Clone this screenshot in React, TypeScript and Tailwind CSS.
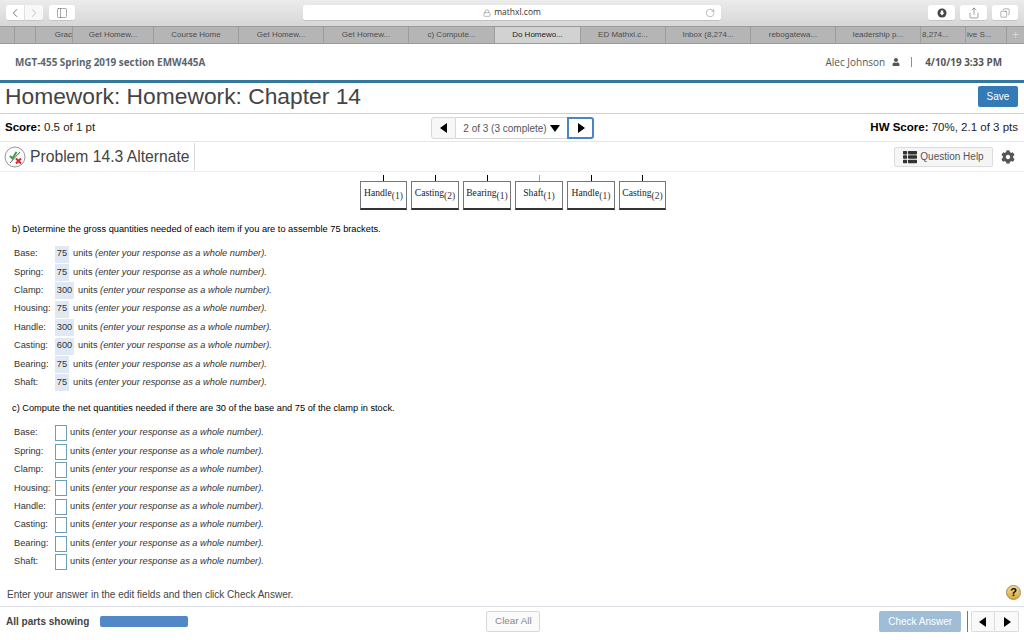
import { ChevronLeft, ChevronRight, PanelLeft, RotateCw, Share, Copy, Lock } from 'lucide-react';
import { FaUser, FaCog, FaThList } from 'react-icons/fa';

const sans = "font-['Liberation_Sans',Arial,sans-serif]";

const tabs = [
  { w: 'w-[15px]', label: '' },
  { w: 'w-[21px]', label: '' },
  { w: 'w-[37px]', label: 'Grac', right: true },
  { w: 'w-[81px]', label: 'Get Homew...' },
  { w: 'w-[85px]', label: 'Course Home' },
  { w: 'w-[85px]', label: 'Get Homew...' },
  { w: 'w-[85px]', label: 'Get Homew...' },
  { w: 'w-[86px]', label: 'c) Compute...' },
  { w: 'w-[86px]', label: 'Do Homewo...', active: true },
  { w: 'w-[85px]', label: 'ED Mathxl.c...' },
  { w: 'w-[85px]', label: 'Inbox (8,274...' },
  { w: 'w-[85px]', label: 'rebogatewa...' },
  { w: 'w-[85px]', label: 'leadership p...' },
  { w: 'w-[45px]', label: '8,274...', left: true },
  { w: 'w-[41px]', label: 'ive S...', left: true },
];

const parts = [
  { name: 'Handle', n: '(1)', w: 'w-[47px]', stem: 'bg-black' },
  { name: 'Casting', n: '(2)', w: 'w-[48px]', stem: 'bg-black' },
  { name: 'Bearing', n: '(1)', w: 'w-[48px]', stem: 'bg-black' },
  { name: 'Shaft', n: '(1)', w: 'w-[48px]', stem: 'bg-gray-400' },
  { name: 'Handle', n: '(1)', w: 'w-[48px]', stem: 'bg-black' },
  { name: 'Casting', n: '(2)', w: 'w-[47px]', stem: 'bg-black' },
];

const gross = [
  { label: 'Base:', value: '75', w: 'w-[14px]' },
  { label: 'Spring:', value: '75', w: 'w-[14px]' },
  { label: 'Clamp:', value: '300', w: 'w-[19px]' },
  { label: 'Housing:', value: '75', w: 'w-[14px]' },
  { label: 'Handle:', value: '300', w: 'w-[19px]' },
  { label: 'Casting:', value: '600', w: 'w-[19px]' },
  { label: 'Bearing:', value: '75', w: 'w-[14px]' },
  { label: 'Shaft:', value: '75', w: 'w-[14px]' },
];

const net = ['Base:', 'Spring:', 'Clamp:', 'Housing:', 'Handle:', 'Casting:', 'Bearing:', 'Shaft:'];

const Hint = () => (
  <span className="text-[#333]">
    units <em>(enter your response as a whole number).</em>
  </span>
);

const Left = ({ size = 10 }: { size?: number }) => (
  <svg width={size} height={size} viewBox="0 0 10 10"><polygon points="8,0 8,10 1,5" fill="#000" /></svg>
);

const Right = ({ size = 10 }: { size?: number }) => (
  <svg width={size} height={size} viewBox="0 0 10 10"><polygon points="2,0 2,10 9,5" fill="#000" /></svg>
);

export default function App() {
  return (
    <div className={`w-[1024px] h-[640px] overflow-hidden bg-white flex flex-col ${sans}`}>
      {/* Browser toolbar */}
      <div className="h-[26px] shrink-0 flex items-center pl-[6px] pr-[6px] bg-gradient-to-b from-[#ececec] to-[#d6d6d6]">
        <div className="w-[18px] h-[16px] bg-white rounded-l-[3px] border-b border-[#c4c4c4] flex items-center justify-center">
          <ChevronLeft size={14} strokeWidth={1.5} className="text-[#666]" />
        </div>
        <div className="w-[18px] h-[16px] ml-px bg-[#f8f8f8] rounded-r-[3px] border-b border-[#c4c4c4] flex items-center justify-center">
          <ChevronRight size={14} strokeWidth={1.5} className="text-[#bbb]" />
        </div>
        <div className="w-[26px] h-[16px] ml-[6px] bg-white rounded-[3px] border-b border-[#c4c4c4] flex items-center justify-center">
          <PanelLeft size={12} strokeWidth={1} className="text-[#555]" />
        </div>
        <div className="w-[418px] h-[16px] ml-[228px] bg-white rounded-[3px] border-b border-[#c0c0c0] relative flex items-center justify-center">
          <span className="flex items-center gap-[3px] text-[8.5px] text-[#333] font-['Open_Sans',sans-serif]">
            <Lock size={8} className="text-[#999]" />
            mathxl.com
          </span>
          <RotateCw size={10} strokeWidth={1} className="absolute right-[6px] top-[3px] text-[#666]" />
        </div>
        <div className="w-[27px] h-[16px] ml-[207px] bg-white rounded-[3px] border-b border-[#c4c4c4] flex items-center justify-center">
          <svg width="10" height="10" viewBox="0 0 10 10">
            <circle cx="5" cy="5" r="4.5" fill="#444" />
            <path d="M3.8 2.5h2.4v2.2h1.3L5 7.4 2.5 4.7h1.3z" fill="#fff" />
          </svg>
        </div>
        <div className="w-[27px] h-[16px] ml-[5px] bg-white rounded-[3px] border-b border-[#c4c4c4] flex items-center justify-center">
          <Share size={12} strokeWidth={1} className="text-[#444]" />
        </div>
        <div className="w-[26px] h-[16px] ml-[5px] bg-white rounded-[3px] border-b border-[#c4c4c4] flex items-center justify-center">
          <Copy size={10} strokeWidth={1} className="text-[#444] -scale-x-100" />
        </div>
      </div>

      {/* Browser tabs */}
      <div className="h-[18px] shrink-0 flex bg-[#b5b5b5] border-y border-[#9a9a9a]">
        {tabs.map((t, i) => (
          <div
            key={i}
            className={`${t.w} shrink-0 border-r border-[#9c9c9c] flex items-center text-[8px] whitespace-nowrap overflow-hidden ${
              t.active ? 'bg-[#d2d2d2] text-[#222]' : 'text-[#4d4d4d]'
            } ${t.right ? 'justify-end' : t.left ? 'justify-start pl-px' : 'justify-center'}`}
          >
            {t.label}
          </div>
        ))}
        <div className="flex-1 flex items-center justify-center text-[12px] leading-none text-[#d8d8d8]">+</div>
      </div>

      {/* Course header */}
      <div className="h-[36px] shrink-0 flex items-center justify-between pl-[15px] pr-[22px] font-['Open_Sans',sans-serif]">
        <span className="text-[9.9px] font-bold text-[#5a6570]">MGT-455 Spring 2019 section EMW445A</span>
        <div className="flex items-center text-[#555]">
          <span className="text-[10px]">Alec Johnson</span>
          <FaUser size={8} className="ml-[7px] text-[#555]" />
          <span className="w-px h-[10px] ml-[11px] bg-[#b08a5a]" />
          <span className="ml-[13px] text-[9.9px] font-bold text-[#555]">4/10/19 3:33 PM</span>
        </div>
      </div>
      <div className="h-[3px] shrink-0 bg-[#32789f]" />

      {/* Title */}
      <div className="h-[31px] shrink-0 flex items-center justify-between pl-[5px] pr-[6px] pb-[3px] border-b border-[#cfcfd8]">
        <h1 className="text-[22.8px] leading-none text-[#444]">Homework: Homework: Chapter 14</h1>
        <button className="w-[40px] h-[21px] bg-[#337ab7] rounded-[2px] text-white text-[10px]">Save</button>
      </div>

      {/* Score row */}
      <div className="h-[28px] shrink-0 relative flex items-center justify-between pl-[5px] pr-[6px] pt-px border-b border-[#e6e6e6] text-[11.5px] text-[#222]">
        <span><b className="text-black">Score:</b> 0.5 of 1 pt</span>
        <div className="absolute left-[431px] top-[3px] h-[22px] flex text-[#555]">
          <div className="w-[25px] bg-[#f7f7f7] border border-[#d8d8d8] rounded-l-[3px] flex items-center justify-center">
            <Left />
          </div>
          <div className="w-[111px] border-y border-[#d8d8d8] flex items-center justify-center gap-[3px] text-[10px] whitespace-nowrap">
            2 of 3 (3 complete)
            <svg width="10" height="8" viewBox="0 0 10 8"><polygon points="0,1 10,1 5,8" fill="#000" /></svg>
          </div>
          <div className="w-[27px] border-2 border-[#4a86c5] rounded-r-[3px] flex items-center justify-center">
            <Right />
          </div>
        </div>
        <span><b className="text-black">HW Score:</b> 70%, 2.1 of 3 pts</span>
      </div>

      {/* Problem row */}
      <div className="h-[30px] shrink-0 flex items-center pl-[4px] pr-[9px] border-b border-[#eeeeee]">
        <svg width="22" height="22" viewBox="0 0 22 22">
          <circle cx="11" cy="11" r="10" fill="#fafafa" stroke="#999" strokeWidth="1" />
          <path d="M6 10l2.5 2.5L12.5 6" fill="none" stroke="#3f9a3f" strokeWidth="2" />
          <path d="M6 17L16 6" stroke="#666" strokeWidth="1" />
          <path d="M12 12.5l5 5M17 12.5l-5 5" stroke="#d02a2a" strokeWidth="2" />
        </svg>
        <span className="ml-[4px] text-[15.7px] text-[#444] whitespace-nowrap">Problem 14.3 Alternate</span>
        <span className="w-px h-[27px] ml-[4px] bg-[#d8d8d8]" />
        <button className="ml-auto w-[99px] h-[20px] bg-[#f5f5f5] border border-[#dcdcdc] rounded-[2px] flex items-center justify-center gap-[3px] text-[10px] text-[#555]">
          <FaThList size={14} className="text-[#333]" />
          Question Help
        </button>
        <FaCog size={14} className="ml-[8px] text-[#555]" />
      </div>

      {/* Question body */}
      <div className="flex-1 min-h-0 pl-[12px] text-[9.25px] text-[#333]">
        <div className="flex gap-[4px] ml-[348px] mt-[3px]">
          {parts.map((p, i) => (
            <div key={i} className={`${p.w} flex flex-col items-center`}>
              <span className={`w-px h-[6px] ${p.stem}`} />
              <div className="w-full h-[29px] border border-[#777] border-b-2 border-b-[#333] pt-[4px] text-center font-['Liberation_Serif',serif] text-[9.6px] leading-[14px] text-[#222] whitespace-nowrap">
                {p.name}<sub className="relative bottom-[-3px] text-[9.6px] text-[#333]">{p.n}</sub>
              </div>
            </div>
          ))}
        </div>

        <p className="mt-[13px] h-[12px] leading-[12px] text-black">
          b) Determine the gross quantities needed of each item if you are to assemble 75 brackets.
        </p>
        <div className="mt-[10px] pl-[2px] flex flex-col">
          {gross.map(row => (
            <div key={row.label} className="h-[18.4px] flex items-center">
              <span className="w-[41px]">{row.label}</span>
              <span className={`${row.w} h-[17px] bg-[#e0e8f3] flex items-center justify-center mr-[4px]`}>{row.value}</span>
              <Hint />
            </div>
          ))}
        </div>

        <p className="mt-[10px] h-[12px] leading-[12px] text-black">
          c) Compute the net quantities needed if there are 30 of the base and 75 of the clamp in stock.
        </p>
        <div className="mt-[10px] pl-[2px] flex flex-col">
          {net.map(label => (
            <div key={label} className="h-[18.4px] flex items-center">
              <span className="w-[41px]">{label}</span>
              <span className="w-[12px] h-[16px] border border-[#6f9fb8] mr-[3px]" />
              <Hint />
            </div>
          ))}
        </div>
      </div>

      {/* Instruction line */}
      <div className="h-[25px] shrink-0 flex items-center justify-between pl-[7px] pr-[3px] pt-px border-b border-[#dddde4] text-[10px] text-[#444]">
        <span>Enter your answer in the edit fields and then click Check Answer.</span>
        <span className="w-[15px] h-[15px] mb-[4px] rounded-full bg-gradient-to-b from-[#f0d890] to-[#d8a840] border border-[#a8894a] flex items-center justify-center text-[11px] font-bold text-black">?</span>
      </div>

      {/* Footer */}
      <div className="h-[33px] shrink-0 flex items-center pl-[6px] pr-[5px] pb-[4px]">
        <span className="w-[94px] text-[10px] font-bold text-[#444]">All parts showing</span>
        <span className="w-[89px] h-[11px] rounded-[2px] bg-[#5288c5]" />
        <button className="ml-[298px] w-[54px] h-[21px] bg-[#fafafa] border border-[#d8d8d8] rounded-[2px] text-[9.8px] text-[#888]">Clear All</button>
        <button className="ml-[339px] w-[82px] h-[21px] bg-[#a0bdd8] rounded-[2px] text-[10px] text-white">Check Answer</button>
        <span className="w-px h-[21px] ml-[6px] bg-[#777]" />
        <div className="ml-[3px] h-[21px] flex">
          <div className="w-[24px] bg-[#f9f9f9] border border-[#dcdcdc] rounded-l-[2px] flex items-center justify-center">
            <Left />
          </div>
          <div className="w-[24px] bg-[#f9f9f9] border border-l-0 border-[#dcdcdc] rounded-r-[2px] flex items-center justify-center">
            <Right />
          </div>
        </div>
      </div>
    </div>
  );
}
